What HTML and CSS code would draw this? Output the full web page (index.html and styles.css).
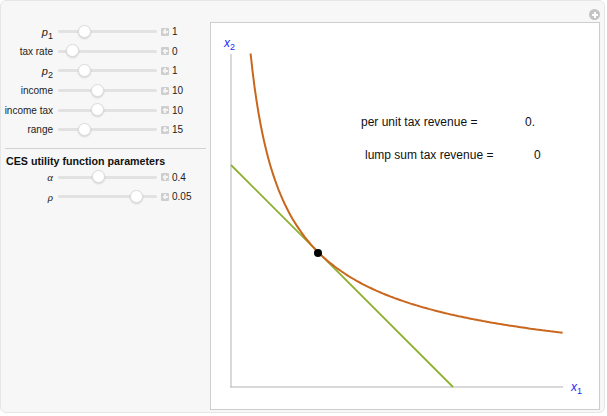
FILE: index.html
```html
<!DOCTYPE html>
<html lang="en">
<head>
    <meta charset="UTF-8">
    <title>Income Tax versus Per Unit Tax</title>
    <link rel="stylesheet" href="styles.css">
</head>
<body>
    <div class="app">
        <span class="corner-plus"></span>

        <div class="controls">
            <div class="row">
                <span class="label"><i>p</i><sub>1</sub></span>
                <span class="slider"><span class="thumb" style="left: 19.5px"></span></span>
                <span class="plus"></span>
                <span class="value">1</span>
            </div>
            <div class="row">
                <span class="label">tax rate</span>
                <span class="slider"><span class="thumb" style="left: 7.5px"></span></span>
                <span class="plus"></span>
                <span class="value">0</span>
            </div>
            <div class="row">
                <span class="label"><i>p</i><sub>2</sub></span>
                <span class="slider"><span class="thumb" style="left: 19.5px"></span></span>
                <span class="plus"></span>
                <span class="value">1</span>
            </div>
            <div class="row">
                <span class="label">income</span>
                <span class="slider"><span class="thumb" style="left: 32.5px"></span></span>
                <span class="plus"></span>
                <span class="value">10</span>
            </div>
            <div class="row">
                <span class="label">income tax</span>
                <span class="slider"><span class="thumb" style="left: 32.5px"></span></span>
                <span class="plus"></span>
                <span class="value">10</span>
            </div>
            <div class="row">
                <span class="label">range</span>
                <span class="slider"><span class="thumb" style="left: 19.5px"></span></span>
                <span class="plus"></span>
                <span class="value">15</span>
            </div>

            <div class="divider"></div>
            <div class="heading">CES utility function parameters</div>

            <div class="row">
                <span class="label greek">α</span>
                <span class="slider"><span class="thumb" style="left: 33.5px"></span></span>
                <span class="plus"></span>
                <span class="value">0.4</span>
            </div>
            <div class="row">
                <span class="label greek">ρ</span>
                <span class="slider"><span class="thumb" style="left: 71.5px"></span></span>
                <span class="plus"></span>
                <span class="value">0.05</span>
            </div>
        </div>

        <div class="plot">
            <svg width="388" height="386" viewBox="211 23 388 386">
                <line class="axis" x1="231" y1="54" x2="231" y2="387.5"></line>
                <line class="axis" x1="230.5" y1="387" x2="563" y2="387"></line>
                <text class="axis-label" x="224" y="47">x<tspan class="sub" dy="3">2</tspan></text>
                <text class="axis-label" x="571" y="391">x<tspan class="sub" dy="3">1</tspan></text>

                <line class="budget" x1="231" y1="165" x2="453" y2="387"></line>
                <path class="utility" id="utility" d=""></path>
                <circle cx="318" cy="253" r="4"></circle>

                <text class="note" x="361" y="126">per unit tax revenue =</text>
                <text class="note" x="525" y="126">0.</text>
                <text class="note" x="365" y="159">lump sum tax revenue =</text>
                <text class="note" x="534" y="159">0</text>
            </svg>
        </div>
    </div>

    <script>
        // CES indifference curve through the optimum, in pixel units from the origin (231, 387)
        const a = 0.397, r = 0.05;
        const level = a * Math.pow(87, r) + (1 - a) * Math.pow(135, r);
        const points = [];
        for (let x = 19.6; x <= 332; x += 2) {
            const y = Math.pow((level - a * Math.pow(x, r)) / (1 - a), 1 / r);
            points.push((231 + x).toFixed(1) + "," + (387 - y).toFixed(1));
        }
        document.getElementById("utility").setAttribute("d", "M" + points.join(" L"));
    </script>
</body>
</html>
```

FILE: styles.css
```css
body {
    margin: 0;
    background: white;
    font-family: "Liberation Sans", Arial, sans-serif;
    color: #222;
}

.app {
    position: relative;
    width: 605px;
    height: 413px;
    box-sizing: border-box;
    border: 1px solid #e6e6e6;
    border-radius: 6px;
    background: #f7f7f7;
    display: flex;
}

.corner-plus {
    position: absolute;
    top: 8px;
    right: 4px;
    width: 11px;
    height: 11px;
    border-radius: 50%;
    background: #c4c4c4;
}

.corner-plus::before,
.corner-plus::after {
    content: "";
    position: absolute;
    background: white;
}

.corner-plus::before {
    left: 2.5px;
    top: 4.5px;
    width: 6px;
    height: 2px;
}

.corner-plus::after {
    left: 4.5px;
    top: 2.5px;
    width: 2px;
    height: 6px;
}

.controls {
    width: 209px;
    padding-top: 21px;
}

.row {
    display: flex;
    align-items: center;
    height: 19.6px;
    font-size: 10px;
}

.label {
    width: 52px;
    margin-right: 5px;
    text-align: right;
    white-space: nowrap;
}

.label i {
    font-size: 11px;
}

.label sub {
    font-size: 9px;
    vertical-align: -3px;
    line-height: 0;
}

.greek {
    font-family: "Liberation Serif", "Times New Roman", serif;
    font-style: italic;
    font-size: 11px;
}

.slider {
    position: relative;
    width: 99px;
    height: 14px;
}

.slider::before {
    content: "";
    position: absolute;
    left: 0;
    right: 0;
    top: 5.5px;
    height: 3px;
    border-radius: 2px;
    background: #e2e2e2;
}

.thumb {
    position: absolute;
    top: 0;
    width: 13px;
    height: 13px;
    box-sizing: border-box;
    border-radius: 50%;
    background: white;
    border: 1px solid #dcdcdc;
    box-shadow: 0 1px 2px rgba(0, 0, 0, 0.15);
}

.plus {
    position: relative;
    width: 8px;
    height: 8px;
    margin-left: 4px;
    background: #cfcfcf;
    border-radius: 1px;
}

.plus::before,
.plus::after {
    content: "";
    position: absolute;
    background: #f4f4f4;
}

.plus::before {
    left: 1.5px;
    top: 3px;
    width: 5px;
    height: 2px;
}

.plus::after {
    left: 3px;
    top: 1.5px;
    width: 2px;
    height: 5px;
}

.value {
    margin-left: 3px;
}

.divider {
    margin: 8px 4px 0 4px;
    border-top: 1px solid #d2d2d2;
}

.heading {
    margin-top: 6px;
    padding-left: 5px;
    height: 13px;
    line-height: 13px;
    font-size: 10.7px;
    font-weight: bold;
    color: #111;
}

.plot {
    margin-top: 21px;
    width: 390px;
    height: 388px;
    box-sizing: border-box;
    border: 1px solid #cdcdcd;
    background: white;
}

.plot svg {
    display: block;
}

.axis {
    stroke: #b3b3b3;
    stroke-width: 1;
}

.axis-label {
    font-family: "Liberation Sans", Arial, sans-serif;
    font-style: italic;
    font-size: 12px;
    fill: #2626f5;
}

.axis-label .sub {
    font-style: normal;
    font-size: 9px;
}

.budget {
    stroke: #8fb032;
    stroke-width: 1.8;
}

.utility {
    fill: none;
    stroke: #c8671d;
    stroke-width: 2;
}

.plot circle {
    fill: black;
}

.note {
    font-family: "Liberation Sans", Arial, sans-serif;
    font-size: 12px;
    fill: #111;
}
```
